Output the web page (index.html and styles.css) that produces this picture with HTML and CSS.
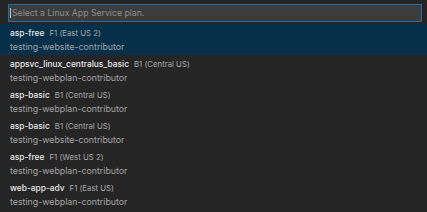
FILE: index.html
```html
<!DOCTYPE html>
<html>
<head>
<meta charset="utf-8">
<link rel="stylesheet" href="styles.css">
</head>
<body>
<div class="picker">
  <div class="input-wrap">
    <div class="input">Select a Linux App Service plan.</div>
  </div>
  <div class="list">
    <div class="row selected">
      <div class="title"><span class="label">asp-free</span><span class="desc">F1 (East US 2)</span></div>
      <div class="detail">testing-website-contributor</div>
    </div>
    <div class="row">
      <div class="title"><span class="label">appsvc_linux_centralus_basic</span><span class="desc">B1 (Central US)</span></div>
      <div class="detail">testing-webplan-contributor</div>
    </div>
    <div class="row">
      <div class="title"><span class="label">asp-basic</span><span class="desc">B1 (Central US)</span></div>
      <div class="detail">testing-webplan-contributor</div>
    </div>
    <div class="row">
      <div class="title"><span class="label">asp-basic</span><span class="desc">B1 (Central US)</span></div>
      <div class="detail">testing-website-contributor</div>
    </div>
    <div class="row">
      <div class="title"><span class="label">asp-free</span><span class="desc">F1 (West US 2)</span></div>
      <div class="detail">testing-webplan-contributor</div>
    </div>
    <div class="row">
      <div class="title"><span class="label">web-app-adv</span><span class="desc">F1 (East US)</span></div>
      <div class="detail">testing-webplan-contributor</div>
    </div>
  </div>
</div>
</body>
</html>
```
FILE: styles.css
```css
html, body {
  margin: 0;
  padding: 0;
  background: #252526;
  width: 427px;
  height: 212px;
  overflow: hidden;
}
.picker {
  font-family: "Inter", "Noto Sans", sans-serif;
  color: #cccccc;
}
.input-wrap {
  padding: 4px 5px 2px 8px;
}
.input {
  height: 16px;
  border: 1px solid #1f6fa8;
  background: #3c3c3c;
  color: #8c8c8c;
  font-size: 8.7px;
  line-height: 16px;
  padding: 0 2px 0 1px;
}
.input::before {
  content: "";
  display: inline-block;
  width: 1px;
  height: 10px;
  background: #cccccc;
  vertical-align: -2px;
  margin-right: 1px;
}
.list {
  display: flex;
  flex-direction: column;
}
.row {
  height: 31px;
  box-sizing: border-box;
  padding: 2px 0 0 10px;
}
.row.selected {
  background: #062f4a;
}
.title {
  line-height: 14px;
  font-size: 8.4px;
  white-space: nowrap;
}
.label {
  color: #e8e8e8;
  font-weight: 500;
}
.desc {
  font-size: 7.8px;
  color: #a8a8a8;
  margin-left: 5px;
}
.detail {
  line-height: 13px;
  font-size: 8.8px;
  color: #a4a4a4;
  white-space: nowrap;
}
```
